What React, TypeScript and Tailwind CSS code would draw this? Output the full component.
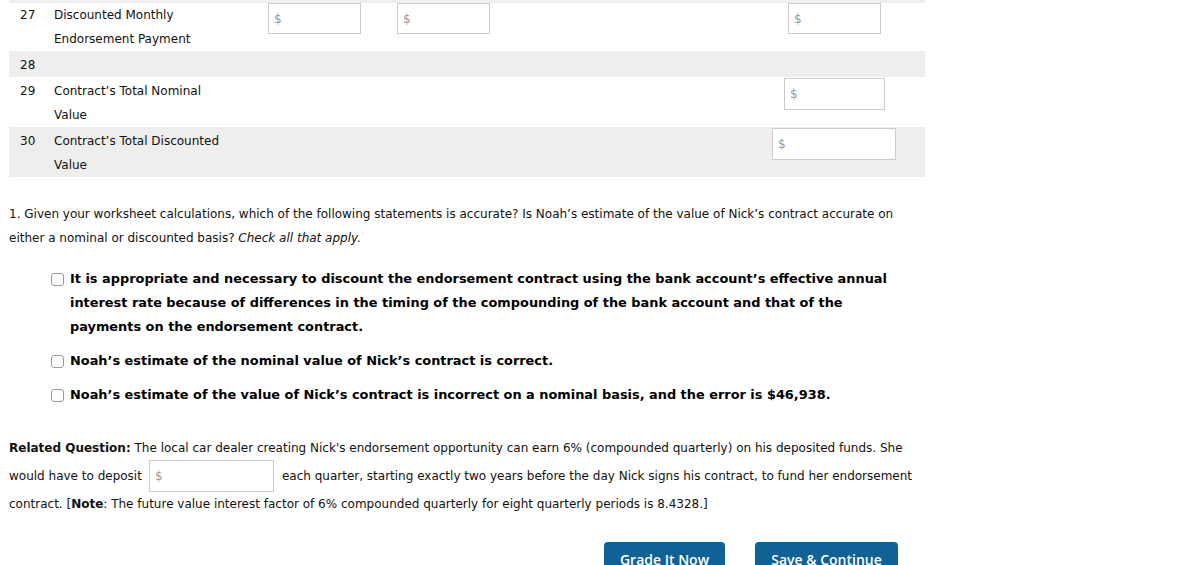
import React from "react";

function MoneyInput({ w, h = "h-[31px]" }: { w: string; h?: string }) {
  return (
    <div className={`${w} ${h} shrink-0 border border-[#cccccc] bg-white flex items-center pl-[5px]`}>
      <span className="text-[12px] text-[#999999]">$</span>
    </div>
  );
}

function Row({
  n,
  lines,
  gray,
  height,
  pad,
  children,
}: {
  n: string;
  lines: string[];
  gray?: boolean;
  height: string;
  pad: string;
  children?: React.ReactNode;
}) {
  return (
    <div className={`flex ${height} ${gray ? "bg-[#eeeeee]" : "bg-white"}`}>
      <div className={`w-[45px] shrink-0 pl-[11px] ${pad} leading-[24px]`}>{n}</div>
      <div className={`w-[214px] shrink-0 ${pad} leading-[24px] whitespace-nowrap`}>
        {lines.map((l) => (
          <div key={l}>{l}</div>
        ))}
      </div>
      {children}
    </div>
  );
}

function Option({ lines }: { lines: string[] }) {
  return (
    <div className="flex pl-[42px]">
      <div className="w-[19px] shrink-0 pt-[6px]">
        <div className="w-[13px] h-[13px] rounded-[3px] border border-[#9a9a9a] bg-white" />
      </div>
      <div className="font-bold text-[12.9px] leading-[24px] text-black whitespace-nowrap">
        {lines.map((l) => (
          <div key={l}>{l}</div>
        ))}
      </div>
    </div>
  );
}

export default function App() {
  return (
    <div
      className="w-[1199px] h-[565px] overflow-hidden bg-white text-[12px] text-[#111111]"
      style={{ fontFamily: '"DejaVu Sans", Verdana, sans-serif' }}
    >
      <div className="w-[916px] ml-[9px]">
        <div className="h-[3px] bg-[#eeeeee]" />
        <Row n="27" lines={["Discounted Monthly", "Endorsement Payment"]} height="h-[48px]" pad="pt-0">
          <MoneyInput w="w-[93px]" />
          <div className="w-[36px] shrink-0" />
          <MoneyInput w="w-[93px]" />
          <div className="w-[298px] shrink-0" />
          <MoneyInput w="w-[93px]" />
        </Row>
        <Row n="28" lines={[""]} gray height="h-[26px]" pad="pt-[2px]" />
        <Row n="29" lines={["Contract’s Total Nominal", "Value"]} height="h-[50px]" pad="pt-[2px]">
          <div className="w-[516px] shrink-0" />
          <div className="pt-px">
            <MoneyInput w="w-[101px]" h="h-[32px]" />
          </div>
        </Row>
        <Row n="30" lines={["Contract’s Total Discounted", "Value"]} gray height="h-[50px]" pad="pt-[2px]">
          <div className="w-[504px] shrink-0" />
          <div className="pt-px">
            <MoneyInput w="w-[124px]" h="h-[32px]" />
          </div>
        </Row>

        <div className="mt-[25px] leading-[24px] whitespace-nowrap">
          <div>
            1. Given your worksheet calculations, which of the following statements is accurate? Is Noah’s estimate of the value of Nick’s contract accurate on
          </div>
          <div>
            either a nominal or discounted basis? <i>Check all that apply.</i>
          </div>
        </div>

        <div className="mt-[17px] flex flex-col gap-[10px]">
          <Option
            lines={[
              "It is appropriate and necessary to discount the endorsement contract using the bank account’s effective annual",
              "interest rate because of differences in the timing of the compounding of the bank account and that of the",
              "payments on the endorsement contract.",
            ]}
          />
          <Option lines={["Noah’s estimate of the nominal value of Nick’s contract is correct."]} />
          <Option
            lines={["Noah’s estimate of the value of Nick’s contract is incorrect on a nominal basis, and the error is $46,938."]}
          />
        </div>

        <div className="mt-[27px] leading-[28px] whitespace-nowrap">
          <div>
            <b>Related Question:</b> The local car dealer creating Nick's endorsement opportunity can earn 6% (compounded quarterly) on his deposited funds. She
          </div>
          <div className="flex items-center h-[28px]">
            <span>would have to deposit</span>
            <span className="ml-[7px] mr-[8px]">
              <MoneyInput w="w-[125px]" h="h-[32px]" />
            </span>
            <span>each quarter, starting exactly two years before the day Nick signs his contract, to fund her endorsement</span>
          </div>
          <div>
            contract. [<b>Note</b>: The future value interest factor of 6% compounded quarterly for eight quarterly periods is 8.4328.]
          </div>
        </div>

        <div
          className="mt-[24px] flex pl-[595px] gap-[30px]"
          style={{ fontFamily: '"Open Sans", sans-serif' }}
        >
          <div className="w-[121px] h-[36px] rounded-[4px] bg-[#0f6196] text-white text-[14px] font-semibold flex justify-center pt-[7px]">
            Grade It Now
          </div>
          <div className="w-[143px] h-[36px] rounded-[4px] bg-[#0f6196] text-white text-[14px] font-semibold flex justify-center pt-[7px]">
            Save &amp; Continue
          </div>
        </div>
      </div>
    </div>
  );
}
